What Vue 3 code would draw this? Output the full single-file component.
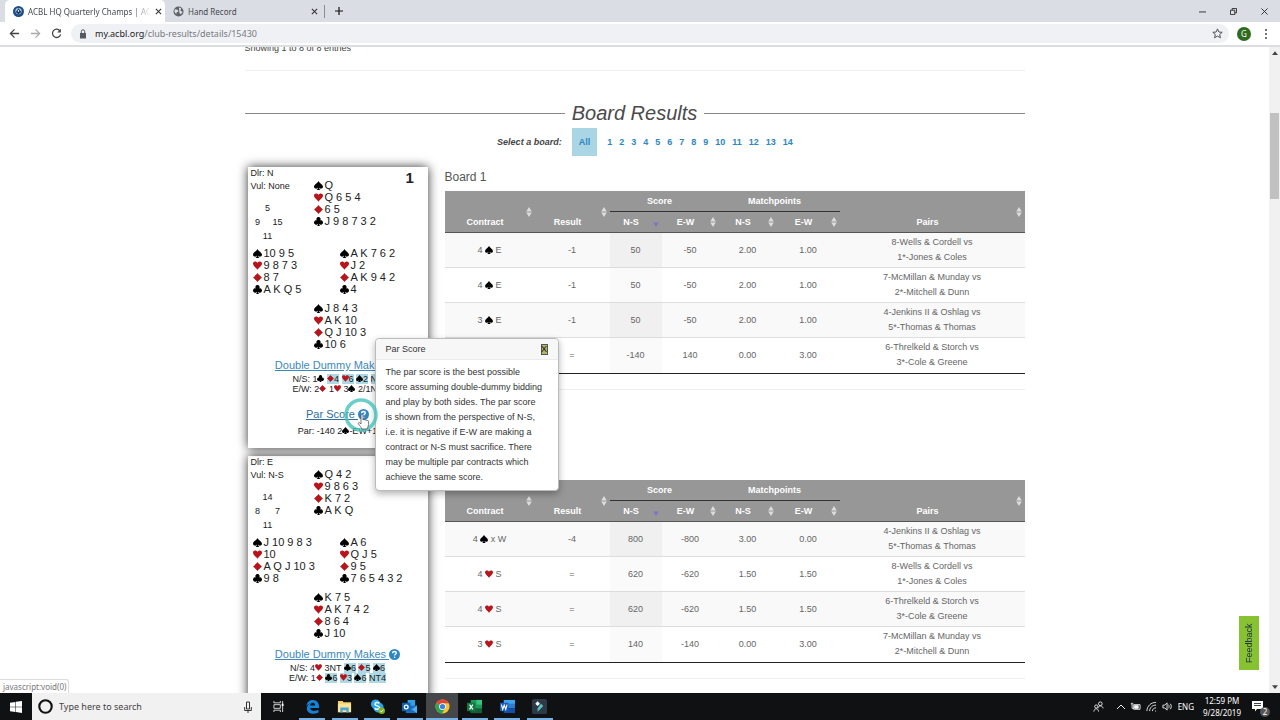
<script setup>
import { h } from 'vue'

const suitIds = { '♠': 'spade', '♥': 'heart', '♦': 'diamond', '♣': 'club' }

const Suited = (props) =>
  props.text.split(/([♠♥♦♣])/).map((part) =>
    suitIds[part]
      ? h('svg', { class: 'suit ' + suitIds[part], viewBox: '0 0 16 16', 'aria-label': suitIds[part] }, [
          h('use', { href: '#suit-' + suitIds[part] })
        ])
      : part
  )
Suited.props = ['text']

const numbers = Array.from({ length: 14 }, (_, i) => i + 1)

const boards = [
  {
    id: 1,
    heading: 'Board 1',
    dealer: 'N',
    vul: 'None',
    hcp: ['5', '9', '15', '11'],
    north: ['♠Q', '♥Q 6 5 4', '♦6 5', '♣J 9 8 7 3 2'],
    west: ['♠10 9 5', '♥9 8 7 3', '♦8 7', '♣A K Q 5'],
    east: ['♠A K 7 6 2', '♥J 2', '♦A K 9 4 2', '♣4'],
    south: ['♠J 8 4 3', '♥A K 10', '♦Q J 10 3', '♣10 6'],
    makes: [
      { side: 'N/S:', bids: ['1♣'], marked: ['♦4', '♥6', '♠2', 'NT'] },
      { side: 'E/W:', bids: ['2♦', '1♥', '3♠', '2/1NT'], marked: [] }
    ],
    par: 'Par: -140 2♠-EW+1',
    rows: [
      ['4 ♠ E', '-1', '50', '-50', '2.00', '1.00', '8-Wells & Cordell vs', '1*-Jones & Coles'],
      ['4 ♠ E', '-1', '50', '-50', '2.00', '1.00', '7-McMillan & Munday vs', '2*-Mitchell & Dunn'],
      ['3 ♠ E', '-1', '50', '-50', '2.00', '1.00', '4-Jenkins II & Oshlag vs', '5*-Thomas & Thomas'],
      ['', '=', '-140', '140', '0.00', '3.00', '6-Threlkeld & Storch vs', '3*-Cole & Greene']
    ]
  },
  {
    id: 2,
    heading: '',
    dealer: 'E',
    vul: 'N-S',
    hcp: ['14', '8', '7', '11'],
    north: ['♠Q 4 2', '♥9 8 6 3', '♦K 7 2', '♣A K Q'],
    west: ['♠J 10 9 8 3', '♥10', '♦A Q J 10 3', '♣9 8'],
    east: ['♠A 6', '♥Q J 5', '♦9 5', '♣7 6 5 4 3 2'],
    south: ['♠K 7 5', '♥A K 7 4 2', '♦8 6 4', '♣J 10'],
    makes: [
      { side: 'N/S:', bids: ['4♥', '3NT'], marked: ['♣6', '♦5', '♠6'] },
      { side: 'E/W:', bids: ['1♦'], marked: ['♣6', '♥3', '♠6', 'NT4'] }
    ],
    rows: [
      ['4 ♠ x W', '-4', '800', '-800', '3.00', '0.00', '4-Jenkins II & Oshlag vs', '5*-Thomas & Thomas'],
      ['4 ♥ S', '=', '620', '-620', '1.50', '1.50', '8-Wells & Cordell vs', '1*-Jones & Coles'],
      ['4 ♥ S', '=', '620', '-620', '1.50', '1.50', '6-Threlkeld & Storch vs', '3*-Cole & Greene'],
      ['3 ♥ S', '=', '140', '-140', '0.00', '3.00', '7-McMillan & Munday vs', '2*-Mitchell & Dunn']
    ]
  }
]

const parText = [
  'The par score is the best possible',
  'score assuming double-dummy bidding',
  'and play by both sides. The par score',
  'is shown from the perspective of N-S,',
  'i.e. it is negative if E-W are making a',
  'contract or N-S must sacrifice. There',
  'may be multiple par contracts which',
  'achieve the same score.'
].join('\n')

const hands = ['north', 'west', 'east', 'south']
</script>

<template>
  <div class="screen">
    <svg class="defs" aria-hidden="true">
      <symbol id="suit-spade" viewBox="0 0 16 16">
        <path d="M8 0C6.500 3.500 0 6.500 0 10a3.600 3.600 0 0 0 6.800 1.600C6.700 13.500 6 15 4.500 16h7C10 15 9.300 13.500 9.200 11.600A3.600 3.600 0 0 0 16 10C16 6.500 9.500 3.500 8 0z" />
      </symbol>
      <symbol id="suit-heart" viewBox="0 0 16 16">
        <path d="M8 15.500C6 12 0 9 0 4.500 0 0 6.500-.5 8 3.500 9.500-.5 16 0 16 4.500 16 9 10 12 8 15.500z" />
      </symbol>
      <symbol id="suit-diamond" viewBox="0 0 16 16">
        <path d="M8 0c2 3 5 6 8 8-3 2-6 5-8 8-2-3-5-6-8-8 3-2 6-5 8-8z" />
        <path d="M8 2l6 6-6 6-6-6z" />
        <circle cx="8" cy="8" r="5" />
      </symbol>
      <symbol id="suit-club" viewBox="0 0 16 16">
        <path d="M8 0a3.700 3.700 0 0 1 3 6 3.900 3.900 0 1 1-2.300 5.800C8.800 13.600 9.500 15 11 16h-6c1.500-1 2.200-2.400 2.300-4.200A3.900 3.900 0 1 1 5 6a3.700 3.700 0 0 1 3-6z" />
      </symbol>
      <symbol id="sort" viewBox="0 0 6 12">
        <path d="M3 0l3 5H0zM3 11L0 6h6z" />
      </symbol>
      <symbol id="question" viewBox="0 0 12 12">
        <circle cx="6" cy="6" r="6" fill="#2f86c4" />
        <path d="M4 4.600C4 3.200 5 2.700 6 2.700s2 .6 2 1.700c0 1.300-1.900 1.300-1.900 2.700" fill="none" stroke="#fff" stroke-width="1.500" />
        <circle cx="6.100" cy="9" r=".9" fill="#fff" />
      </symbol>
    </svg>

    <header class="tabs">
      <div class="tab active">
        <svg class="fav" viewBox="0 0 12 12"><circle cx="6" cy="6" r="6" fill="#1d4f86" /><circle cx="6" cy="5.500" r="3.400" fill="#b9cbe0" /><path d="M6 2.500l3 4L6 9 3 6.500z" fill="#14335c" /><path d="M6 4l1 1.500-1 1-1-1z" fill="#fff" /></svg>
        <span class="tab-title fade">ACBL HQ Quarterly Champs | AC</span>
        <button class="close" aria-label="Close tab"><svg viewBox="0 0 8 8"><path d="M1 1l6 6M7 1L1 7" /></svg></button>
      </div>
      <div class="tab second">
        <svg class="fav" viewBox="0 0 12 12"><circle cx="6" cy="6" r="5.500" fill="#5f6368" /><path d="M2 3.500l3 .5 1 2-2 .8L3.500 9 1.500 6zM6.500 1.500L9 2.500 8 5l2.500 1.500L8.500 9 7 7.500z" fill="#dcdfe5" /></svg>
        <span class="tab-title">Hand Record</span>
        <button class="close" aria-label="Close tab"><svg viewBox="0 0 8 8"><path d="M1 1l6 6M7 1L1 7" /></svg></button>
      </div>
      <button class="new-tab" aria-label="New tab"><svg viewBox="0 0 8 8"><path d="M4 0v8M0 4h8" /></svg></button>
      <div class="win">
        <button aria-label="Minimize"><svg viewBox="0 0 8 8"><path d="M0 4.500h8" /></svg></button>
        <button aria-label="Restore"><svg viewBox="0 0 8 8"><path d="M.5 2.500h5v5h-5zM2.500 2.500v-2h5v5h-2" /></svg></button>
        <button aria-label="Close"><svg viewBox="0 0 8 8"><path d="M.5.5l7 7M7.500.5l-7 7" /></svg></button>
      </div>
    </header>

    <nav class="toolbar">
      <button aria-label="Back"><svg viewBox="0 0 12 12"><path d="M11 6H2M6 1.500L1.500 6 6 10.500" /></svg></button>
      <button aria-label="Forward" class="dim"><svg viewBox="0 0 12 12"><path d="M1 6h9M6 1.500L10.500 6 6 10.500" /></svg></button>
      <button aria-label="Reload"><svg viewBox="0 0 12 12"><path d="M9.800 3.200A4.500 4.500 0 1 0 10.500 7" /><path d="M10.800.8v4H6.800z" fill="#444" stroke="none" /></svg></button>
      <div class="url">
        <svg class="lock" viewBox="0 0 8 10"><path d="M1 4h6v5.500H1z" fill="#555a60" /><path d="M2.300 4V2.500a1.700 1.700 0 0 1 3.400 0V4" fill="none" stroke="#555a60" /></svg>
        <span class="addr"><b>my.acbl.org</b>/club-results/details/15430</span>
        <svg class="star" viewBox="0 0 12 12"><path d="M6 1l1.500 3.400 3.600.3-2.700 2.400.8 3.600L6 8.800l-3.200 1.900.8-3.600L.9 4.700l3.600-.3z" /></svg>
      </div>
      <span class="avatar">G</span>
      <button aria-label="Menu" class="menu"><svg viewBox="0 0 4 12"><circle cx="2" cy="2" r="1" /><circle cx="2" cy="6" r="1" /><circle cx="2" cy="10" r="1" /></svg></button>
    </nav>

    <div class="viewport">
      <main class="page">
        <div class="content">
          <p class="showing">Showing 1 to 8 of 8 entries</p>
          <hr>
          <h2 class="title">Board Results</h2>
          <div class="picker">
            <em>Select a board:</em>
            <a href="#all" class="all">All</a>
            <a v-for="n in numbers" :key="n" :href="'#b' + n">{{ n }}</a>
          </div>

          <article v-for="b in boards" :key="b.id" class="board">
            <section class="card" :class="{ raised: b.par }">
              <div class="deal">
                <div class="info">
                  <div>Dlr: {{ b.dealer }}</div>
                  <div>Vul: {{ b.vul }}</div>
                </div>
                <div class="hcp">
                  <span v-for="(p, i) in b.hcp" :key="i">{{ p }}</span>
                </div>
                <strong v-if="b.heading" class="num">{{ b.id }}</strong>
                <ul v-for="s in hands" :key="s" class="hand" :class="s">
                  <li v-for="line in b[s]" :key="line"><Suited :text="line" /></li>
                </ul>
              </div>
              <div class="link"><a href="#makes">Double Dummy Makes <svg class="help"><use href="#question" /></svg></a></div>
              <div v-for="m in b.makes" :key="m.side" class="makes">
                {{ m.side }}
                <template v-for="t in m.bids" :key="t"><span><Suited :text="t" /></span>{{ ' ' }}</template>
                <template v-for="t in m.marked" :key="t"><mark><Suited :text="t" /></mark>{{ ' ' }}</template>
              </div>
              <template v-if="b.par">
                <div class="link par">
                  <a href="#par">Par Score <svg class="help"><use href="#question" /></svg></a>
                </div>
                <div class="par-line"><Suited :text="b.par" /></div>
                <aside class="popover" role="dialog" aria-label="Par Score">
                  <header><span>Par Score</span><button aria-label="Close">X</button></header>
                  <p>{{ parText }}</p>
                </aside>
                <svg class="pointer" viewBox="0 0 36 36" aria-hidden="true">
                  <circle cx="18" cy="18" r="15" fill="none" stroke="#45c3bb" stroke-opacity=".8" stroke-width="3.600" />
                  <path d="M18 18.500c0-1.300 2-1.300 2 0V23c.5-.8 1.900-.7 2 .3.500-.7 1.800-.5 1.900.4.6-.5 1.700-.2 1.700.8v3.200c0 1.800-1.200 2.800-1.500 4.300h-5.300c-.5-1.800-2-3-3.300-5-.6-1.200.8-1.900 1.500-1l1 1z" fill="#fff" stroke="#555" stroke-width=".8" />
                </svg>
              </template>
            </section>

            <section class="results">
              <h3>{{ b.heading }}</h3>
              <table>
                <colgroup><col class="c1"><col class="c2"><col class="c3"><col class="c4"><col class="c5"><col class="c6"><col></colgroup>
                <thead>
                  <tr>
                    <th rowspan="2">Contract<svg class="sort"><use href="#sort" /></svg></th>
                    <th rowspan="2">Result<svg class="sort"><use href="#sort" /></svg></th>
                    <th colspan="2" class="group">Score</th>
                    <th colspan="2" class="group">Matchpoints</th>
                    <th rowspan="2">Pairs<svg class="sort"><use href="#sort" /></svg></th>
                  </tr>
                  <tr>
                    <th>N-S<svg class="sort on" viewBox="0 0 6 12"><path d="M3 11L0 6h6z" /></svg></th>
                    <th>E-W<svg class="sort"><use href="#sort" /></svg></th>
                    <th>N-S<svg class="sort"><use href="#sort" /></svg></th>
                    <th>E-W<svg class="sort"><use href="#sort" /></svg></th>
                  </tr>
                </thead>
                <tbody>
                  <tr v-for="(r, i) in b.rows" :key="i">
                    <td><Suited :text="r[0]" /></td>
                    <td v-for="k in 5" :key="k" :class="{ sorted: k === 2 }">{{ r[k] }}</td>
                    <td>{{ r[6] }}<br>{{ r[7] }}</td>
                  </tr>
                </tbody>
              </table>
              <hr>
            </section>
          </article>
        </div>
      </main>
      <div class="scrollbar">
        <svg viewBox="0 0 8 5"><path d="M4 0l4 5H0z" /></svg>
        <div class="thumb"></div>
        <svg class="down" viewBox="0 0 8 5"><path d="M0 0h8L4 5z" /></svg>
      </div>
      <div class="status">javascript:void(0)</div>
      <button class="feedback">Feedback</button>
    </div>

    <footer class="taskbar">
      <button class="start" aria-label="Start"><svg viewBox="0 0 12 12"><path d="M0 1.700L5.500.9v4.800H0zM6 .8L12 0v5.700H6zM0 6.200h5.500V11L0 10.300zM6 6.200h6V12l-6-.9z" fill="#fff" /></svg></button>
      <label class="search">
        <svg class="ring" viewBox="0 0 14 14"><circle cx="7" cy="7" r="5.800" fill="none" stroke="#111" stroke-width="2" /></svg>
        <input type="text" placeholder="Type here to search" aria-label="Type here to search">
        <svg class="mic" viewBox="0 0 8 12"><path d="M2.500 1h3v7h-3zM.7 6v3.500h6.600V6M4 9.500V12" fill="none" stroke="#333" /></svg>
      </label>
      <button class="view" aria-label="Task view"><svg viewBox="0 0 12 12"><path d="M1 0v2h7V0M1 4h7v4H1zM1 12v-2h7v2M10.500 0v12" fill="none" stroke="#ddd" /><path d="M9.500 3h2v2.500h-2z" fill="#fff" /></svg></button>
      <div class="apps">
        <button aria-label="Edge"><svg viewBox="0 0 16 16"><path d="M1.500 7.500C2 3 5 1 8.500 1c4 0 6.500 3 6.500 7v1.500H5.500c.2 2 2 3.200 4.300 3.200 1.700 0 3.200-.4 4.500-1.200v3c-1.300.8-3 1.200-5 1.200C5 15.700 2 13.500 2 10c0-2.300 1.300-4.300 3.500-5.300C3.800 5 2.400 6 1.500 7.500zM5.600 6.800h5.200c0-1.800-1-2.800-2.500-2.800S5.800 5 5.600 6.800z" fill="#1482d8" /></svg></button>
        <button aria-label="File Explorer"><svg viewBox="0 0 16 16"><path d="M1 2h5l1 1.500h8V14H1z" fill="#f5cf6b" /><path d="M1 5h14v9H1z" fill="#fbe39a" /><path d="M3.500 9h9v5.500H10V12H6v2.500H3.500z" fill="#4aa7d8" /></svg></button>
        <button aria-label="Skype"><svg viewBox="0 0 16 16"><circle cx="6" cy="5.500" r="5" fill="#28a8ea" /><circle cx="9" cy="9" r="5.500" fill="#28a8ea" /><path d="M10 4.500C9 3.300 5.300 3.300 5.300 5.500c0 2.400 4.900 1.300 4.900 3.700 0 2-3.700 2.100-5.200.6" fill="none" stroke="#fff" stroke-width="1.600" /><circle cx="12.500" cy="12.500" r="3.500" fill="#82b51e" /><path d="M10.800 12.500l1.200 1.300 2.200-2.400" fill="none" stroke="#fff" /></svg></button>
        <button aria-label="Outlook"><svg viewBox="0 0 16 16"><path d="M6 1h8v8H6z" fill="#35a0e2" /><path d="M4 7h12v8H4z" fill="#1a6fc0" /><path d="M4 7l6 4.500L16 7v8z" fill="#50b2ec" /><path d="M0 4h9v9H0z" fill="#0f62ac" /><circle cx="4.500" cy="8.500" r="2" fill="none" stroke="#fff" stroke-width="1.400" /></svg></button>
        <button aria-label="Chrome" class="current"><svg viewBox="0 0 16 16"><circle cx="8" cy="8" r="7.500" fill="#f7c62f" /><path d="M8 8h-.5L1.500 4.200A7.500 7.500 0 0 0 7.500 15.500L11 9.500z" fill="#2ea552" /><path d="M1.500 4.200A7.500 7.500 0 0 1 14.600 4.500H8V8z" fill="#e0453a" /><circle cx="8" cy="8" r="3.600" fill="#fff" /><circle cx="8" cy="8" r="2.800" fill="#3f7fe8" /></svg></button>
        <button aria-label="Excel"><svg viewBox="0 0 16 16"><path d="M4 1h12v14H4z" fill="#1d9a5a" /><path d="M10 1h6v5h-6z" fill="#35c481" /><path d="M4 10h12v5H4z" fill="#165c38" /><path d="M0 4h9v9H0z" fill="#10793f" /><path d="M2.700 6l3.600 5M6.300 6l-3.600 5" stroke="#fff" stroke-width="1.300" /></svg></button>
        <button aria-label="Word"><svg viewBox="0 0 16 16"><path d="M4 1h12v5H4z" fill="#41a5ee" /><path d="M4 5h12v5H4z" fill="#2b7cd3" /><path d="M4 10h12v5H4z" fill="#1450a5" /><path d="M0 4h9v9H0z" fill="#185abd" /><path d="M1.500 6l1.400 5 1.600-4.500L6.100 11l1.400-5" fill="none" stroke="#fff" stroke-width="1.200" /></svg></button>
        <button aria-label="Filmora"><svg viewBox="0 0 16 16"><rect width="16" height="16" rx="2" fill="#2c3a47" /><path d="M6 2.500l2.500 2.500L6 7.500 3.500 5z" fill="#fff" /><path d="M9.500 5L12 7.500 6 13.500V10z" fill="#5fc4c0" /></svg></button>
      </div>
      <div class="tray">
        <svg class="t12" viewBox="0 0 12 12"><circle cx="8" cy="3" r="2" /><path d="M5.500 8c0-3.500 5-3.500 5.500 0" /><circle cx="3.500" cy="6" r="1.700" /><path d="M1 11.500c0-4 5-4 5 0" /></svg>
        <svg class="t8" viewBox="0 0 8 8"><path d="M0 6l4-4 4 4" /></svg>
        <svg class="t12" viewBox="0 0 12 12"><path d="M4 4h7v5H4zM1.500 2v2M3 2v2M2.300 4v4H4" /><path d="M5 5h4v3H5z" fill="#fff" /></svg>
        <svg class="t12" viewBox="0 0 12 12"><path d="M1 11C1 5.500 5.500 1.500 11 1.500M4 11c0-4 3-6.500 7-6.500M7 11c0-2 1.500-3.500 4-3.500M10 11h1" /></svg>
        <svg class="t12" viewBox="0 0 12 12"><path d="M1 4.500h2L5.500 2v8L3 7.500H1zM7 4c1 1 1 3 0 4M9 3c1.500 1.500 1.500 4.500 0 6" /></svg>
        <span class="lang">ENG</span>
        <div class="clock">12:59 PM<br>9/28/2019</div>
        <div class="notif">
          <svg viewBox="0 0 12 12"><path d="M0 1h11v8H5l-2 2.500V9H0z" fill="#fff" stroke="none" /><path d="M2 3.500h7M2 5.500h7" stroke="#444" /></svg>
          <span>2</span>
        </div>
      </div>
    </footer>
  </div>
</template>

<style>
html,
body {
  margin: 0;
  background: #fff;
}
.suit {
  width: 9px;
  height: 9px;
  fill: #000;
  vertical-align: -1px;
}
.suit.heart,
.suit.diamond {
  fill: #b8141c;
}
</style>

<style scoped>
* {
  box-sizing: border-box;
}
.screen {
  height: 100vh;
  display: flex;
  flex-direction: column;
  overflow: hidden;
  font-family: "Liberation Sans", Arial, sans-serif;
  font-size: 9px;
  color: #222;
}
.defs {
  position: absolute;
  width: 0;
  height: 0;
}
button {
  border: 0;
  padding: 0;
  background: none;
  font: inherit;
  color: inherit;
  display: flex;
  align-items: center;
  justify-content: center;
}
hr {
  border: 0;
  border-top: 1px solid #eee;
  margin: 0;
}

/* Browser tabs */
.tabs {
  flex: none;
  height: 22px;
  background: #dadde4;
  display: flex;
  align-items: center;
  padding-left: 5px;
  font-family: "Noto Sans", sans-serif;
  font-size: 8px;
  color: #45494e;
}
.tab {
  height: 22px;
  width: 160px;
  display: flex;
  align-items: center;
  gap: 4px;
  padding: 0 6px 0 8px;
}
.tab.active {
  background: #fff;
  border-radius: 5px 5px 0 0;
}
.tab.second {
  border-right: 1px solid #8a8d92;
  height: 13px;
}
.fav {
  width: 11px;
  height: 11px;
  flex: none;
}
.tab-title {
  flex: 1;
  white-space: nowrap;
}
.fade {
  mask-image: linear-gradient(to right, #000 85%, transparent);
}
.tabs svg {
  stroke-width: 1.200;
}
.close svg {
  width: 7px;
  height: 7px;
  stroke: #333;
}
.new-tab {
  margin-left: 10px;
}
.new-tab svg {
  width: 8px;
  height: 8px;
  stroke: #111;
}
.win {
  margin-left: auto;
  display: flex;
}
.win button {
  width: 31px;
  height: 20px;
}
.win svg {
  width: 7px;
  height: 7px;
  fill: none;
  stroke: #222;
  stroke-width: 1;
}

/* Address bar */
.toolbar {
  flex: none;
  height: 25px;
  background: #fff;
  border-bottom: 2px solid #dcdde0;
  display: flex;
  align-items: center;
  padding: 0 8px;
  font-family: "Noto Sans", sans-serif;
}
.toolbar button svg {
  width: 11px;
  height: 11px;
  fill: none;
  stroke: #444;
  stroke-width: 1.400;
}
.toolbar button {
  width: 13px;
  margin-right: 8px;
}
.toolbar .dim svg {
  stroke: #aaa;
}
.url {
  flex: 1;
  height: 19px;
  border-radius: 10px;
  background: #f0f1f5;
  display: flex;
  align-items: center;
  padding: 0 6px 0 8px;
  gap: 8px;
}
.lock {
  width: 8px;
  height: 10px;
}
.addr {
  color: #777b80;
  flex: 1;
}
.addr b {
  font-weight: 400;
  color: #222;
}
.star {
  width: 11px;
  height: 11px;
  fill: none;
  stroke: #444;
}
.avatar {
  width: 14px;
  height: 14px;
  margin: 0 8px;
  border-radius: 50%;
  background: #2f6b1e;
  color: #fff;
  font-size: 8px;
  line-height: 14px;
  text-align: center;
}
.toolbar .menu {
  margin: 0;
}
.toolbar .menu svg {
  width: 4px;
  height: 12px;
  fill: #444;
  stroke: none;
}

/* Page */
.viewport {
  position: relative;
  flex: 1;
  min-height: 0;
  display: flex;
  overflow: hidden;
}
.page {
  flex: 1;
  min-width: 0;
  height: 100%;
  overflow: hidden;
}
.content {
  max-width: 780px;
  margin: -6px auto 0;
}
.showing {
  margin: 0 0 15px;
  line-height: 14px;
  color: #444;
}
.title {
  margin: 30px 0 3px;
  display: flex;
  align-items: center;
  gap: 7px;
  font-size: 20px;
  line-height: 24px;
  font-weight: 400;
  font-style: italic;
  color: #4a4a4a;
}
.title::before,
.title::after {
  content: "";
  flex: 1;
  border-top: 1px solid #888;
}
.picker {
  display: flex;
  justify-content: center;
  align-items: center;
  gap: 7px;
  padding-left: 21px;
  margin-bottom: 11px;
  font-weight: 700;
  line-height: 28px;
}
.picker em {
  color: #444;
}
.picker a {
  color: #2e86c1;
  text-decoration: none;
}
.picker .all {
  background: #a9d5e5;
  padding: 0 7px;
  margin: 0 3px;
}
.board {
  display: grid;
  grid-template-columns: 180px 1fr;
  gap: 17px;
  padding-left: 3px;
  margin-bottom: 8px;
}
.card {
  position: relative;
  height: 281px;
  background: #fff;
  box-shadow: 0 0 10px rgba(0, 0, 0, 0.8);
  text-align: center;
}
.raised {
  z-index: 2;
}
.deal {
  display: grid;
  grid-template-columns: 66px 22px 1fr 32px;
  grid-template-rows: 34px 46px 55px 48px;
  text-align: left;
  margin-bottom: 8px;
}
.info {
  grid-area: 1 / 1;
  padding-left: 3px;
  line-height: 13px;
}
.hcp {
  grid-area: 2 / 1;
  width: 40px;
  display: grid;
  grid-template-columns: 1fr 1fr;
  grid-auto-rows: 14px;
  line-height: 14px;
  text-align: center;
}
.hcp span:first-child,
.hcp span:last-child {
  grid-column: span 2;
}
.num {
  grid-area: 1 / 4;
  font-size: 15px;
  line-height: 22px;
  padding-left: 10px;
}
.hand {
  list-style: none;
  margin: 0;
  padding: 0;
  font-size: 11px;
  line-height: 12px;
  white-space: nowrap;
}
.hand :deep(.suit) {
  margin-right: 2px;
}
.north {
  grid-area: 1 / 2 / 3 / 5;
  padding-top: 12px;
}
.west {
  grid-area: 3 / 1 / 4 / 3;
  padding-left: 5px;
}
.east {
  grid-area: 3 / 3 / 4 / 5;
  padding-left: 4px;
}
.south {
  grid-area: 4 / 2 / 5 / 5;
}
.link {
  font-size: 11px;
  line-height: 14px;
}
.link a {
  color: #3c88bd;
}
.help {
  width: 11px;
  height: 11px;
  vertical-align: -2px;
}
.makes {
  line-height: 10px;
}
.link + .makes {
  margin-top: 2px;
}
.makes mark {
  background: #add8e6;
  color: inherit;
}
.makes :deep(.suit),
.par-line :deep(.suit) {
  width: 7px;
  height: 7px;
  vertical-align: 0;
}
.par {
  margin-top: 13px;
}
.par a {
  color: #2f6f9f;
}
.par-line {
  margin-top: 4px;
  line-height: 12px;
}
.popover {
  position: absolute;
  left: 127px;
  top: 171px;
  width: 184px;
  background: #fff;
  border: 1px solid #bbb;
  border-radius: 4px;
  box-shadow: 0 3px 7px rgba(0, 0, 0, 0.3);
  text-align: left;
  color: #333;
}
.popover header {
  display: flex;
  justify-content: space-between;
  align-items: center;
  height: 21px;
  padding: 0 10px;
  background: #f7f7f7;
  border-bottom: 1px solid #ebebeb;
  border-radius: 4px 4px 0 0;
}
.popover header button {
  width: 7px;
  height: 11px;
  background: #b5b56a;
  border: 1px solid #555;
  color: #111;
}
.popover p {
  margin: 0;
  padding: 5px 10px;
  line-height: 15px;
  white-space: pre;
}
.pointer {
  position: absolute;
  left: 95px;
  top: 230px;
  width: 36px;
  height: 36px;
}

/* Results */
.results h3 {
  margin: 0 0 4px;
  height: 20px;
  font-size: 12px;
  font-weight: 400;
  line-height: 20px;
  color: #555;
}
.results hr {
  margin-top: 15px;
}
table {
  width: 100%;
  table-layout: fixed;
  border-collapse: separate;
  border-spacing: 0;
  border-bottom: 1px solid #222;
  text-align: center;
  color: #666;
}
.c1 { width: 90px; }
.c2 { width: 75px; }
.c3 { width: 52px; }
.c4 { width: 57px; }
.c5 { width: 58px; }
.c6 { width: 63px; }
th {
  position: relative;
  height: 21px;
  padding: 0 9px 0 0;
  background: #979797;
  color: #fff;
  line-height: 20px;
  vertical-align: bottom;
  border-bottom: 1px solid #555;
}
th.group {
  border-bottom-color: #333;
}
.sort {
  position: absolute;
  right: 3px;
  top: 50%;
  width: 6px;
  height: 11px;
  margin-top: -5px;
  fill: #ddd;
}
.sort.on {
  fill: #7a76c4;
}
td {
  height: 35px;
  padding: 2px 0;
  line-height: 15px;
  border-bottom: 1px solid #ddd;
}
tr:last-child td {
  border-bottom-color: transparent;
}
tbody tr:nth-child(odd) {
  background: #f9f9f9;
}
.sorted {
  background: #fafafa;
}
tbody tr:nth-child(odd) .sorted {
  background: #f0f0f0;
}
td :deep(.suit) {
  width: 8px;
  height: 8px;
}

/* Overlays */
.scrollbar {
  width: 11px;
  background: #f1f1f1;
  display: flex;
  flex-direction: column;
  align-items: center;
  padding: 4px 0;
}
.scrollbar svg {
  width: 6px;
  height: 4px;
  fill: #444;
}
.thumb {
  width: 9px;
  height: 86px;
  margin-top: 58px;
  background: #c1c1c1;
}
.scrollbar .down {
  margin-top: auto;
}
.status {
  position: absolute;
  left: 0;
  bottom: 0;
  padding: 0 2px 0 3px;
  border: 1px solid #ddd;
  border-width: 1px 1px 0 0;
  border-radius: 0 3px 0 0;
  background: #fff;
  font-family: "Noto Sans", sans-serif;
  font-size: 8px;
  line-height: 13px;
  color: #777;
}
.feedback {
  position: absolute;
  right: 21px;
  bottom: 23px;
  width: 20px;
  height: 54px;
  background: #86c232;
  color: #234;
  writing-mode: vertical-rl;
  transform: rotate(180deg);
}

/* Taskbar */
.taskbar {
  flex: none;
  height: 27px;
  background: #101113;
  display: flex;
  align-items: stretch;
  font-family: "Noto Sans", sans-serif;
  font-size: 8px;
  color: #fff;
}
.start {
  width: 32px;
}
.start svg {
  width: 12px;
  height: 12px;
}
.search {
  width: 229px;
  background: #f1f1f1;
  display: flex;
  align-items: center;
  padding: 0 9px 0 6px;
  gap: 6px;
}
.ring {
  width: 15px;
  height: 15px;
}
.search input {
  flex: 1;
  min-width: 0;
  border: 0;
  padding: 0;
  background: none;
  font-family: inherit;
  font-size: 9px;
}
.search input::placeholder {
  color: #444;
}
.mic {
  width: 8px;
  height: 12px;
}
.view {
  width: 35px;
}
.view svg {
  width: 11px;
  height: 11px;
}
.apps {
  width: 260px;
  display: flex;
  justify-content: space-between;
}
.apps button {
  width: 32px;
  background: linear-gradient(#76b0e4, #76b0e4) center bottom / 26px 2px no-repeat;
}
.apps .current {
  background-color: #45474a;
  background-size: 32px 2px;
}
.apps svg {
  width: 15px;
  height: 15px;
}
.tray {
  margin-left: auto;
  display: flex;
  align-items: center;
  gap: 5px;
  padding-right: 10px;
}
.tray svg {
  fill: none;
  stroke: #eee;
}
.t12 {
  width: 11px;
  height: 11px;
}
.t8 {
  width: 8px;
  height: 8px;
  margin-left: 8px;
}
.clock {
  text-align: center;
  line-height: 12px;
  margin: 0 6px 0 4px;
}
.notif {
  position: relative;
  width: 18px;
  height: 14px;
}
.notif svg {
  width: 12px;
  height: 12px;
}
.notif span {
  position: absolute;
  right: 0;
  bottom: -3px;
  width: 10px;
  height: 10px;
  border-radius: 50%;
  background: #555;
  line-height: 10px;
  text-align: center;
}
</style>
